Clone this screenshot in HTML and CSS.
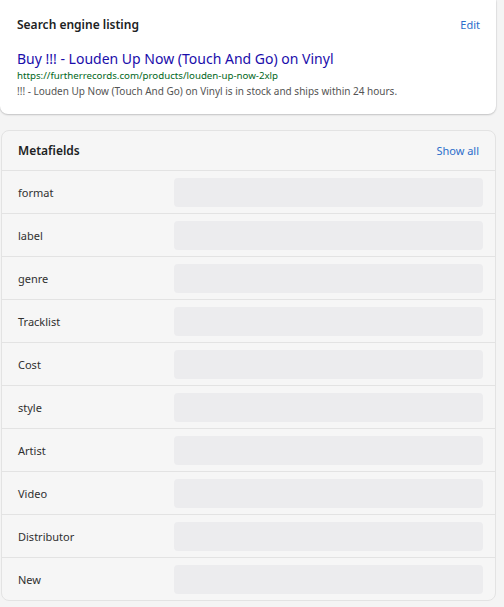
FILE: index.html
```html
<!DOCTYPE html>
<html lang="en">
<head>
<meta charset="utf-8">
<title>Product</title>
<link rel="stylesheet" href="styles.css">
</head>
<body>
<div class="page">
  <section class="card seo">
    <div class="card-head">
      <h2 class="card-title">Search engine listing</h2>
      <a class="link" href="#">Edit</a>
    </div>
    <div class="preview">
      <div class="preview-title">Buy !!! - Louden Up Now (Touch And Go) on Vinyl</div>
      <div class="preview-url">https://furtherrecords.com/products/louden-up-now-2xlp</div>
      <div class="preview-desc">!!! - Louden Up Now (Touch And Go) on Vinyl is in stock and ships within 24 hours.</div>
    </div>
  </section>

  <section class="card meta">
    <div class="meta-head">
      <h2 class="card-title">Metafields</h2>
      <a class="link" href="#">Show all</a>
    </div>
    <div class="meta-row"><span class="meta-label">format</span><span class="meta-field"></span></div>
    <div class="meta-row"><span class="meta-label">label</span><span class="meta-field"></span></div>
    <div class="meta-row"><span class="meta-label">genre</span><span class="meta-field"></span></div>
    <div class="meta-row"><span class="meta-label">Tracklist</span><span class="meta-field"></span></div>
    <div class="meta-row"><span class="meta-label">Cost</span><span class="meta-field"></span></div>
    <div class="meta-row"><span class="meta-label">style</span><span class="meta-field"></span></div>
    <div class="meta-row"><span class="meta-label">Artist</span><span class="meta-field"></span></div>
    <div class="meta-row"><span class="meta-label">Video</span><span class="meta-field"></span></div>
    <div class="meta-row"><span class="meta-label">Distributor</span><span class="meta-field"></span></div>
    <div class="meta-row"><span class="meta-label">New</span><span class="meta-field"></span></div>
  </section>
</div>
</body>
</html>
```

FILE: styles.css
```css
* { box-sizing: border-box; }
html, body { margin: 0; padding: 0; }
body {
  background: #f4f4f4;
  font-family: "Noto Sans", "Open Sans", sans-serif;
  color: #202223;
}
.page {
  width: 496px;
  display: flex;
  flex-direction: column;
  gap: 16px;
}
.card {
  border-radius: 0 0 8px 8px;
}
.seo {
  background: #ffffff;
  height: 114px;
  padding: 14px 16px 0 17px;
  box-shadow: 0 1px 2px rgba(0,0,0,0.18), 0 0 0 1px rgba(63,63,68,0.04);
}
.card-head {
  display: flex;
  justify-content: space-between;
  align-items: center;
  height: 20px;
}
.card-title {
  margin: 0;
  font-size: 12px;
  font-weight: 600;
  color: #202223;
}
.link {
  color: #2c6ecb;
  font-size: 11px;
  text-decoration: none;
}
.preview {
  margin-top: 15px;
  display: flex;
  flex-direction: column;
}
.preview-title {
  color: #1a0dab;
  font-size: 14px;
  line-height: 19px;
}
.preview-url {
  color: #006621;
  font-size: 9.7px;
  line-height: 16px;
}
.preview-desc {
  color: #545454;
  font-size: 10px;
  line-height: 15px;
}
.meta {
  background: #f6f6f6;
  border: 1px solid #e3e3e3;
  border-radius: 8px;
  margin-left: 1px;
  width: 495px;
}
.meta-head {
  height: 40px;
  padding: 0 16px 0 16px;
  display: flex;
  justify-content: space-between;
  align-items: center;
  border-bottom: 1px solid #e3e3e3;
}
.meta-row {
  height: 43px;
  display: grid;
  grid-template-columns: 156px 1fr;
  align-items: center;
  padding: 0 12px 0 16px;
  border-bottom: 1px solid #e3e3e3;
}
.meta-row:last-child { border-bottom: none; height: 42px; }
.meta-label {
  font-size: 11px;
  color: #303030;
}
.meta-field {
  height: 29px;
  background: #ececee;
  border-radius: 4px;
}
```
